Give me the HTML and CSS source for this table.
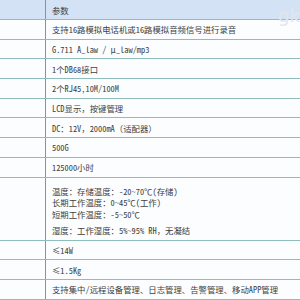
FILE: index.html
```html
<!DOCTYPE html>
<html lang="zh">
<head>
<meta charset="utf-8">
<link rel="stylesheet" href="styles.css">
</head>
<body>
<div class="spec">
  <div class="row head"><div class="k"></div><div class="v">参数</div></div>
  <div class="row"><div class="k"></div><div class="v">支持16路模拟电话机或16路模拟音频信号进行录音</div></div>
  <div class="row"><div class="k"></div><div class="v">G.711 A_law / μ_law/mp3</div></div>
  <div class="row"><div class="k"></div><div class="v">1个DB68接口</div></div>
  <div class="row"><div class="k"></div><div class="v">2个RJ45,10M/100M</div></div>
  <div class="row"><div class="k"></div><div class="v">LCD显示，按键管理</div></div>
  <div class="row"><div class="k"></div><div class="v">DC：12V，2000mA（适配器）</div></div>
  <div class="row"><div class="k"></div><div class="v">500G</div></div>
  <div class="row"><div class="k"></div><div class="v">125000小时</div></div>
  <div class="row multi"><div class="k"></div><div class="v lines">
    <span class="line">温度：存储温度：-20~70℃(存储)</span>
    <span class="line">长期工作温度：0~45℃(工作)</span>
    <span class="line">短期工作温度：-5~50℃</span>
    <span class="line gap">湿度：工作湿度：5%~95% RH，无凝结</span>
  </div></div>
  <div class="row"><div class="k"></div><div class="v">≤14W</div></div>
  <div class="row"><div class="k"></div><div class="v">≤1.5Kg</div></div>
  <div class="row"><div class="k"></div><div class="v">支持集中/远程设备管理、日志管理、告警管理、移动APP管理</div></div>
</div>
<div class="mark">gk</div>
</body>
</html>
```
FILE: styles.css
```css
html, body {
  margin: 0;
  padding: 0;
  background: #ffffff;
}
body {
  width: 300px;
  height: 300px;
  overflow: hidden;
  position: relative;
  font-family: "Noto Sans Mono CJK SC", "Noto Sans CJK SC", sans-serif;
  font-size: 8.4px;
  color: #404040;
}
.spec {
  display: flex;
  flex-direction: column;
}
.row {
  display: grid;
  grid-template-columns: 46px 1fr;
  height: 19.7px;
  box-sizing: border-box;
  border-bottom: 1px solid #8fbcbd;
  background: #fbfdfe;
}
.row.head {
  height: 20px;
  background: #d4e2f6;
}
.k {
  border-right: 1px solid #6f9ea0;
}
.v {
  display: flex;
  align-items: center;
  padding-left: 6px;
  white-space: nowrap;
}
.row.multi {
  height: 63px;
}
.lines {
  flex-direction: column;
  align-items: flex-start;
  justify-content: flex-start;
  padding-top: 8px;
}
.line {
  display: block;
  line-height: 11.5px;
}
.line.gap {
  margin-top: 5px;
}
.mark {
  position: absolute;
  left: 278px;
  top: 5px;
  font-family: "DejaVu Sans", sans-serif;
  font-size: 18px;
  color: #e2e6ec;
}
```
